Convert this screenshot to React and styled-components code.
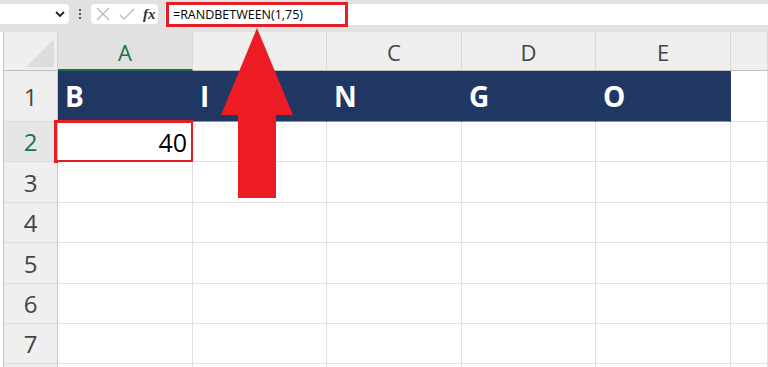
import React from "react";
import styled, { createGlobalStyle } from "styled-components";

const GlobalStyle = createGlobalStyle`
  html, body { margin: 0; padding: 0; background: #ffffff; }
  body { font-family: "Open Sans", "Noto Sans", sans-serif; overflow: hidden; }
`;

const Page = styled.div`
  position: relative;
  width: 768px;
  height: 367px;
  overflow: hidden;
  background: #ffffff;
`;

const Toolbar = styled.div`
  display: flex;
  align-items: center;
  height: 32px;
  background: #e1e1e1;
  box-sizing: border-box;
  padding-bottom: 4px;
`;

const NameBox = styled.div`
  display: flex;
  align-items: center;
  justify-content: flex-end;
  width: 69px;
  height: 20px;
  padding-right: 4px;
  box-sizing: border-box;
  background: #ffffff;
  border-radius: 0 4px 4px 0;
`;

const Dots = styled.div`
  display: flex;
  flex-direction: column;
  gap: 2px;
  margin: 0 10px 0 10px;
  span {
    width: 2px;
    height: 2px;
    background: #555;
  }
`;

const IconBox = styled.div`
  display: flex;
  align-items: center;
  gap: 9px;
  width: 67px;
  height: 20px;
  padding-left: 5px;
  box-sizing: border-box;
  background: #ffffff;
  border-radius: 4px;
`;

const Fx = styled.span`
  font-family: "Liberation Serif", "DejaVu Serif", serif;
  font-style: italic;
  font-weight: bold;
  font-size: 15px;
  color: #333;
  margin-left: -1px;
`;

const FormulaInput = styled.div`
  position: relative;
  flex: 1;
  height: 21px;
  margin-left: 7px;
  background: #ffffff;
  display: flex;
  align-items: center;
  padding-left: 8px;
  font-size: 12.5px;
  color: #000;
  box-sizing: border-box;
`;

const Highlight = styled.div`
  position: absolute;
  border: 3px solid #e31e26;
  box-sizing: border-box;
  pointer-events: none;
`;

const Sheet = styled.div`
  display: grid;
  grid-template-columns: 54px 135px 134px 135px 134px 135px 1fr;
  margin-left: 3px;
  border-left: 1px solid #c8c8c8;
`;

const Corner = styled.div`
  height: 39px;
  background: #efefef;
  border-right: 1px solid #d4d4d4;
  border-bottom: 1px solid #bdbdbd;
  box-sizing: border-box;
  position: relative;
  &::after {
    content: "";
    position: absolute;
    right: 3px;
    bottom: 3px;
    width: 0;
    height: 0;
    border-left: 28px solid transparent;
    border-bottom: 28px solid #dcdcdc;
  }
`;

const ColHead = styled.div`
  height: 39px;
  display: flex;
  align-items: center;
  justify-content: center;
  font-size: 22px;
  color: ${(p) => (p.$active ? "#1e7145" : "#444")};
  background: ${(p) => (p.$active ? "#e1e1e1" : "#efefef")};
  border-right: 1px solid #d9d9d9;
  border-bottom: ${(p) => (p.$active ? "2px solid #1e7145" : "1px solid #bdbdbd")};
  box-sizing: border-box;
  padding-top: 2px;
`;

const RowHead = styled.div`
  height: ${(p) => p.$h}px;
  display: flex;
  align-items: center;
  justify-content: center;
  font-size: 24px;
  color: ${(p) => (p.$active ? "#1e7145" : "#444")};
  background: ${(p) => (p.$active ? "#e6e6e6" : "#efefef")};
  border-right: 1px solid #c8c8c8;
  border-bottom: 1px solid #dcdcdc;
  box-sizing: border-box;
`;

const Cell = styled.div`
  position: relative;
  height: ${(p) => p.$h}px;
  display: flex;
  align-items: center;
  justify-content: ${(p) => (p.$right ? "flex-end" : "flex-start")};
  padding: 0 5px 0 7px;
  box-sizing: border-box;
  background: ${(p) => (p.$title ? "#213763" : "#ffffff")};
  color: ${(p) => (p.$title ? "#ffffff" : "#000")};
  font-weight: ${(p) => (p.$title ? 700 : 400)};
  font-size: ${(p) => (p.$title ? 28 : 25)}px;
  border-right: 1px solid ${(p) => (p.$title ? "#213763" : "#e1e1e1")};
  border-bottom: 1px solid ${(p) => (p.$title ? "#8a94a8" : "#e1e1e1")};
`;

const ArrowSvg = styled.svg`
  position: absolute;
  left: 219px;
  top: 28px;
`;

const columns = ["A", "B", "C", "D", "E", ""];
const bingo = ["B", "I", "N", "G", "O", ""];
const rowHeights = [51, 40, 41, 40, 41, 40, 40, 40];

export default function App() {
  return (
    <Page>
      <GlobalStyle />
      <Toolbar>
        <NameBox>
          <svg width="10" height="7" viewBox="0 0 10 7">
            <polyline points="1,1 5,5 9,1" fill="none" stroke="#222" strokeWidth="1.8" />
          </svg>
        </NameBox>
        <Dots>
          <span />
          <span />
          <span />
        </Dots>
        <IconBox>
          <svg width="14" height="14" viewBox="0 0 14 14">
            <path d="M1 1 L13 13 M13 1 L1 13" stroke="#b5b5b5" strokeWidth="1.2" fill="none" />
          </svg>
          <svg width="16" height="14" viewBox="0 0 16 14">
            <polyline points="1,8 5,12 15,2" stroke="#b5b5b5" strokeWidth="1.2" fill="none" />
          </svg>
          <Fx>fx</Fx>
        </IconBox>
        <FormulaInput>
          =RANDBETWEEN(1,75)
          <Highlight style={{ left: 1, top: -2, width: 182, height: 25 }} />
        </FormulaInput>
      </Toolbar>

      <Sheet>
        <Corner />
        {columns.map((c, i) => (
          <ColHead key={"h" + i} $active={c === "A"}>
            {c}
          </ColHead>
        ))}
        {rowHeights.map((h, r) => (
          <React.Fragment key={"r" + r}>
            <RowHead $h={h} $active={r === 1}>
              {r < 7 ? r + 1 : ""}
            </RowHead>
            {columns.map((c, ci) => {
              const title = r === 0 && ci < 5;
              return (
                <Cell key={ci} $h={h} $title={title} $right={r === 1 && ci === 0}>
                  {title ? bingo[ci] : r === 1 && ci === 0 ? "40" : ""}
                  {r === 1 && ci === 0 && (
                    <Highlight style={{ left: -4, top: -2, width: 140, height: 43 }} />
                  )}
                </Cell>
              );
            })}
          </React.Fragment>
        ))}
      </Sheet>

      <ArrowSvg width="76" height="172" viewBox="0 0 76 172">
        <polygon points="38,0 74,87 57,87 57,170 19,170 19,87 2,87" fill="#ed1c24" />
      </ArrowSvg>
    </Page>
  );
}
